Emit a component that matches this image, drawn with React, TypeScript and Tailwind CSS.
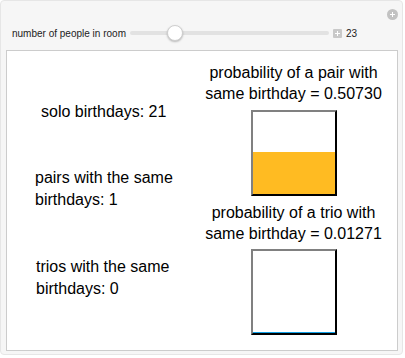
import React from "react";

function Box({ frac, color }: { frac: number; color: string }) {
  return (
    <div className="w-[86px] h-[86px] border-l-2 border-t-2 border-[#808080] border-r-2 border-b-2 border-r-black border-b-black bg-white flex flex-col justify-end">
      <div style={{ height: `${Math.max(1, frac * 82)}px`, backgroundColor: color }} />
    </div>
  );
}

export default function App() {
  return (
    <div className="w-[405px] h-[358px] bg-white" style={{ fontFamily: '"Liberation Sans", Arial, sans-serif' }}>
      <div className="w-[403px] h-[355px] bg-[#f6f6f6] border border-[#e6e6e6] rounded-[4px] flex flex-col">
        <div className="flex justify-end pr-[4px] pt-[8px] h-[20px]">
          <div className="w-[11px] h-[11px] rounded-full bg-[#c2c2c2] flex items-center justify-center relative">
            <div className="absolute w-[5px] h-[1.5px] bg-white" />
            <div className="absolute w-[1.5px] h-[5px] bg-white" />
          </div>
        </div>
        <div className="flex items-center h-[24px] pl-[11px] text-[10px] text-[#222]">
          <span>number of people in room</span>
          <div className="ml-[4px] w-[199px] h-[4px] rounded-full bg-[#e2e2e2] relative">
            <div className="absolute left-[37px] top-[-6px] w-[16px] h-[16px] rounded-full bg-white border border-[#cfcfcf] shadow-[0_1px_2px_rgba(0,0,0,0.25)]" />
          </div>
          <div className="ml-[4px] w-[9px] h-[9px] bg-[#c9c9c9] rounded-[1px] flex items-center justify-center relative">
            <div className="absolute w-[5px] h-[1px] bg-white" />
            <div className="absolute w-[1px] h-[5px] bg-white" />
          </div>
          <span className="ml-[4px]">23</span>
        </div>
        <div className="ml-[5px] mt-[5px] w-[392px] h-[301px] bg-white border border-[#cccccc] flex text-[16px] text-black">
          <div className="w-[190px] flex flex-col leading-[22px]">
            <div className="pl-[34px] mt-[50px]">solo birthdays: 21</div>
            <div className="pl-[28px] mt-[44px]">pairs with the same<br />birthdays: 1</div>
            <div className="pl-[29px] mt-[45px]">trios with the same<br />birthdays: 0</div>
          </div>
          <div className="flex-1 flex flex-col items-center leading-[21px] pt-[11px] pr-[7px]">
            <div className="text-center whitespace-nowrap">probability of a pair with<br />same birthday = 0.50730</div>
            <div className="mt-[6px]"><Box frac={0.5073} color="#ffbb22" /></div>
            <div className="text-center whitespace-nowrap mt-[6px]">probability of a trio with<br />same birthday = 0.01271</div>
            <div className="mt-[5px]"><Box frac={0.01271} color="#10a0e6" /></div>
          </div>
        </div>
      </div>
    </div>
  );
}
